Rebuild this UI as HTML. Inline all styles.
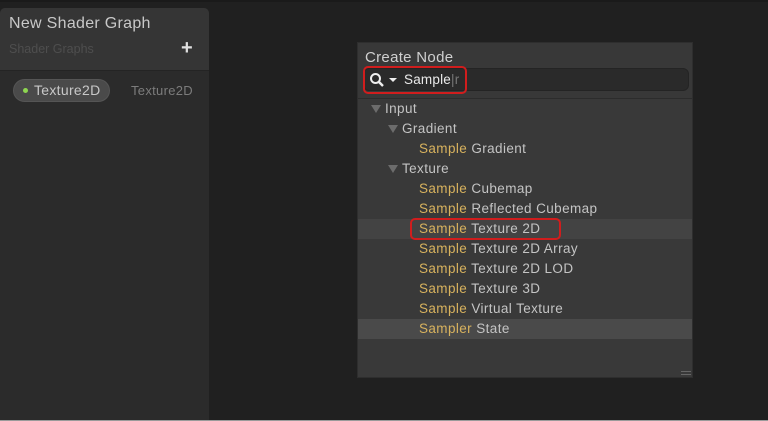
<!DOCTYPE html>
<html><head><style>
*{margin:0;padding:0;box-sizing:border-box}
body{width:768px;height:421px;background:#202020;font-family:"Liberation Sans",sans-serif;position:relative;overflow:hidden}
.a{position:absolute}
.row{position:absolute;left:0;width:334px;height:20px;line-height:20px;font-size:13.5px;letter-spacing:0.4px;color:#c4c4c4;white-space:nowrap}
.s{color:#d8b25e}
.tri{display:inline-block;width:0;height:0;border-left:5px solid transparent;border-right:5px solid transparent;border-top:8px solid #6c6c6c;margin-right:4px;vertical-align:0}
</style></head><body>
<div class="a" style="left:0;top:0;width:768px;height:2px;background:#1a1a1a"></div>
<div class="a" style="left:0;top:8px;width:209px;height:413px;background:#2b2b2b;border-radius:5px 5px 0 0"></div>
<div class="a" style="left:0;top:8px;width:209px;height:63px;background:#353535;border-radius:5px 5px 0 0;border-bottom:1px solid #242424"></div>
<div class="a" style="left:9px;top:15px;font-size:16px;letter-spacing:0.3px;color:#c8c8c8">New Shader Graph</div>
<div class="a" style="left:9px;top:42px;font-size:12.5px;color:#4e4e4e">Shader Graphs</div>
<div class="a" style="left:181px;top:37px;font-size:20px;color:#e0e0e0;font-weight:bold">+</div>
<div class="a" style="left:13px;top:79px;width:97px;height:23px;background:#4a4a4a;border-radius:12px;border:1px solid #555"></div>
<div class="a" style="left:23px;top:88px;width:5px;height:5px;border-radius:50%;background:#8ed651"></div>
<div class="a" style="left:34px;top:82px;font-size:14px;letter-spacing:0.3px;color:#c8c8c8">Texture2D</div>
<div class="a" style="left:131px;top:83px;font-size:13px;letter-spacing:0.3px;color:#7c7c7c">Texture2D</div>

<div class="a" style="left:357px;top:42px;width:336px;height:336px;background:#383838;border:1px solid #2e2e2e">
 <div class="a" style="left:7px;top:6px;font-size:15px;letter-spacing:0.3px;color:#d0d0d0">Create Node</div>
 <div class="a" style="left:5px;top:25px;width:326px;height:23px;background:#2a2a2a;border-radius:6px;border:1px solid #242424"></div>
 <div class="a" style="left:5px;top:23px;width:104px;height:28px;border:2px solid #d01d1d;border-radius:5px"></div>
 <svg class="a" style="left:11px;top:29px" width="30" height="16"><circle cx="6.5" cy="6.5" r="4.5" fill="none" stroke="#eee" stroke-width="2"/><path d="M10 10l4 4" stroke="#eee" stroke-width="2.4"/><path d="M20 6h8l-4 4z" fill="#eee"/></svg>
 <div class="a" style="left:46px;top:29px;font-size:13.5px;letter-spacing:0.2px;color:#eaeaea">Sample<span style="color:#777">|r</span></div>
 <div class="a" style="left:0;top:55px;width:334px;height:279px;background:#393939;border-top:1px solid #2c2c2c"></div>
 <div class="row" style="top:56px;padding-left:13px"><span class="tri"></span>Input</div>
 <div class="row" style="top:76px;padding-left:30px"><span class="tri"></span>Gradient</div>
 <div class="row" style="top:96px;padding-left:61px"><span class="s">Sample</span> Gradient</div>
 <div class="row" style="top:116px;padding-left:30px"><span class="tri"></span>Texture</div>
 <div class="row" style="top:136px;padding-left:61px"><span class="s">Sample</span> Cubemap</div>
 <div class="row" style="top:156px;padding-left:61px"><span class="s">Sample</span> Reflected Cubemap</div>
 <div class="row" style="top:176px;padding-left:61px;background:#434343"><span class="s">Sample</span> Texture 2D</div>
 <div class="a" style="left:52px;top:175px;width:151px;height:22px;border:2px solid #d01d1d;border-radius:5px"></div>
 <div class="row" style="top:196px;padding-left:61px"><span class="s">Sample</span> Texture 2D Array</div>
 <div class="row" style="top:216px;padding-left:61px"><span class="s">Sample</span> Texture 2D LOD</div>
 <div class="row" style="top:236px;padding-left:61px"><span class="s">Sample</span> Texture 3D</div>
 <div class="row" style="top:256px;padding-left:61px"><span class="s">Sample</span> Virtual Texture</div>
 <div class="row" style="top:276px;padding-left:61px;background:#4a4a4a"><span class="s">Sampler</span> State</div>
 <div class="a" style="left:323px;top:328px;width:10px;height:1px;background:#666"></div>
 <div class="a" style="left:323px;top:331px;width:10px;height:1px;background:#666"></div>
</div>
<div class="a" style="left:0;top:420px;width:768px;height:1px;background:#9a9a9a"></div>
</body></html>
